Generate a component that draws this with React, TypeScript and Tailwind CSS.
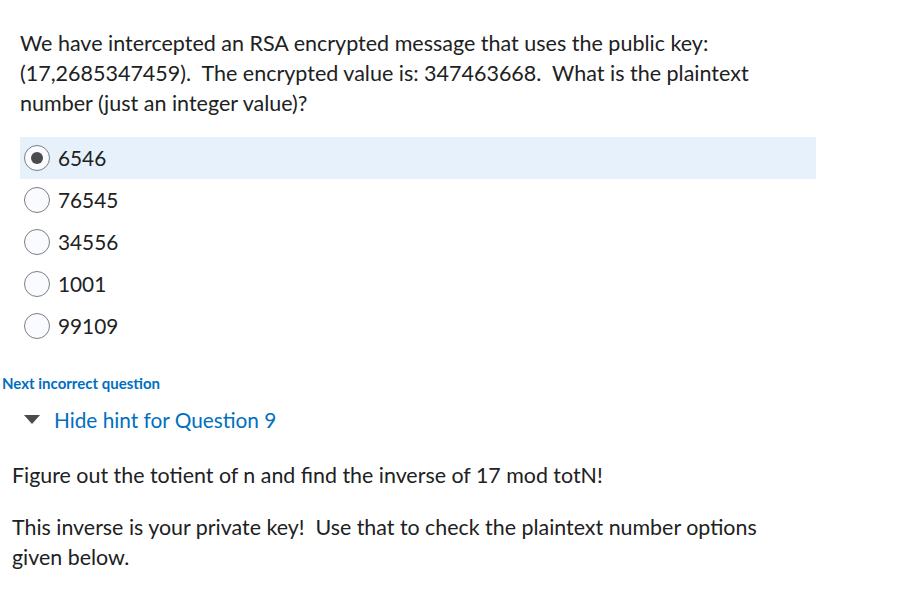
import React from 'react';

const options = ['6546', '76545', '34556', '1001', '99109'];

const Radio = ({ checked }: { checked: boolean }) => (
  <span className="w-[26px] h-[26px] rounded-full border border-[#7c7f82] bg-[#f9fbff] flex items-center justify-center shrink-0">
    {checked && <span className="w-[12px] h-[12px] rounded-full bg-[#494c4e]" />}
  </span>
);

export default function App() {
  const selected = 0;
  return (
    <div className="w-[910px] h-[611px] bg-white overflow-hidden text-[#202122] font-['Lato','Noto_Sans',sans-serif]">
      <div className="pt-[28px] pl-[20px] pr-[40px]">
        <p className="text-[21.5px] leading-[30px] max-w-[760px]">
          We have intercepted an RSA encrypted message that uses the public key: (17,2685347459).&nbsp; The encrypted value is: 347463668.&nbsp; What is the plaintext number (just an integer value)?
        </p>
      </div>

      <div className="mt-[19px] ml-[20px] w-[796px]">
        {options.map((opt, i) => (
          <label
            key={opt}
            className={`h-[42px] flex items-center gap-[8px] pl-[4px] ${i === selected ? 'bg-[#e7f1fb]' : ''}`}
          >
            <Radio checked={i === selected} />
            <span className="text-[20.8px] leading-[30px]">{opt}</span>
          </label>
        ))}
      </div>

      <div className="mt-[24px] pl-[2px]">
        <a className="text-[15px] font-bold text-[#006fbf] leading-[20px]">Next incorrect question</a>
      </div>

      <div className="mt-[10px] pl-[24px] flex items-center gap-[14px] h-[30px]">
        <svg width="16" height="10" viewBox="0 0 16 10" className="shrink-0">
          <path d="M0 0 H16 L8 9 Z" fill="#494c4e" />
        </svg>
        <span className="text-[20.8px] text-[#006fbf] leading-[30px]">Hide hint for Question 9</span>
      </div>

      <div className="pl-[12px] mt-[25px] text-[21.4px] leading-[30px] max-w-[780px]">
        <p>Figure out the totient of n and find the inverse of 17 mod totN!</p>
        <p className="mt-[22px]">
          This inverse is your private key!&nbsp; Use that to check the plaintext number options given below.
        </p>
      </div>
    </div>
  );
}
